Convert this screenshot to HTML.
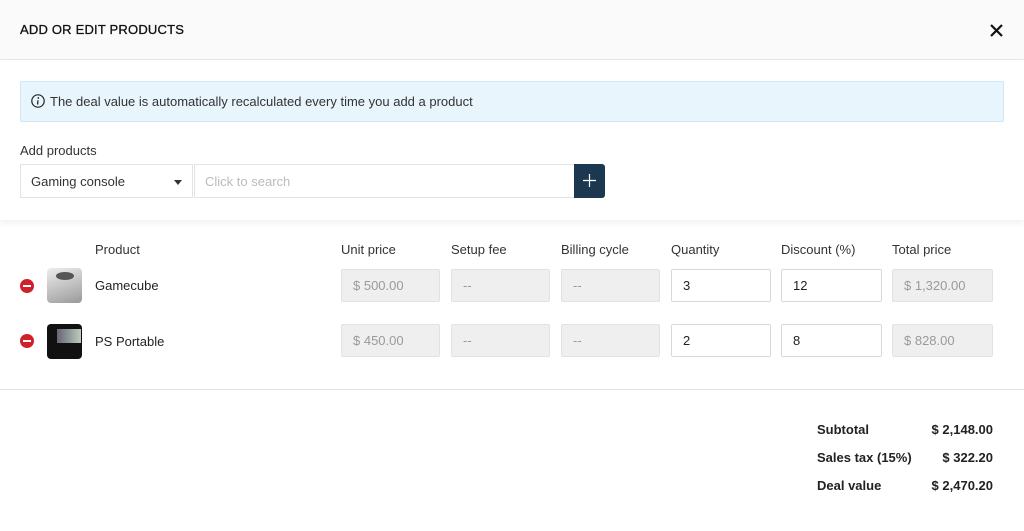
<!DOCTYPE html><html><head><style>
body{margin:0;width:1024px;height:531px;background:#fff;font-family:"Liberation Sans",sans-serif;color:#222;position:relative;overflow:hidden;font-size:13px}
.a{position:absolute}
.hdr{left:0;top:0;width:1024px;height:59px;background:#fafafa;border-bottom:1px solid #e6e6e6}
.top{left:0;top:60px;width:1024px;height:160px;background:#fff;box-shadow:0 3px 6px rgba(0,0,0,.06)}
.inp{position:absolute;height:33px;width:99px;border:1px solid #d9d9d9;box-sizing:border-box;padding-left:11px;line-height:32px;font-size:13px;border-radius:2px}
.dis{background:#efefef;color:#9a9a9a;border-color:#e2e2e2}
.th{position:absolute;top:242px;font-size:13px;color:#333}
.min{position:absolute;width:14px;height:14px;border-radius:50%;background:#d0202a;left:20px}
.min:after{content:"";position:absolute;left:3px;top:6px;width:8px;height:2px;background:#fff}
</style></head><body>
<div class="a hdr"></div>
<div class="a" style="left:20px;top:22px;font-size:13px;letter-spacing:.2px;color:#111;-webkit-text-stroke:.3px #111">ADD OR EDIT PRODUCTS</div>
<svg class="a" style="left:990px;top:24px" width="13" height="13"><path d="M1 1L12 12M12 1L1 12" stroke="#111" stroke-width="2.2"/></svg>
<div class="a top"></div>
<div class="a" style="left:20px;top:81px;width:982px;height:39px;background:#e9f5fc;border:1px solid #cfe8f4;border-radius:2px"></div>
<svg class="a" style="left:31px;top:94px" width="14" height="14"><circle cx="7" cy="7" r="6.2" fill="none" stroke="#222" stroke-width="1.2"/><circle cx="7.3" cy="4" r=".9" fill="#222"/><path d="M7 6.3L6.5 10.5" stroke="#222" stroke-width="1.3"/></svg>
<div class="a" style="left:50px;top:94px;color:#333">The deal value is automatically recalculated every time you add a product</div>
<div class="a" style="left:20px;top:143px;color:#333">Add products</div>
<div class="a" style="left:20px;top:164px;width:173px;height:34px;border:1px solid #e3e3e3;box-sizing:border-box"></div>
<div class="a" style="left:31px;top:174px;color:#333">Gaming console</div>
<div class="a" style="left:174px;top:180px;width:0;height:0;border-left:4px solid transparent;border-right:4px solid transparent;border-top:5px solid #333"></div>
<div class="a" style="left:194px;top:164px;width:381px;height:34px;border:1px solid #e3e3e3;box-sizing:border-box"></div>
<div class="a" style="left:205px;top:174px;color:#bbb">Click to search</div>
<div class="a" style="left:574px;top:164px;width:31px;height:34px;background:#1c3850;border-radius:0 3px 3px 0"></div>
<svg class="a" style="left:582px;top:173px" width="15" height="15"><path d="M7.5 1V14M1 7.5H14" stroke="#fff" stroke-width="1.2"/></svg>
<div class="th" style="left:95px">Product</div><div class="th" style="left:341px">Unit price</div><div class="th" style="left:451px">Setup fee</div><div class="th" style="left:561px">Billing cycle</div><div class="th" style="left:671px">Quantity</div><div class="th" style="left:781px">Discount (%)</div><div class="th" style="left:892px">Total price</div>
<div class="min" style="top:279px"></div><div class="min" style="top:334px"></div>
<div class="a" style="left:47px;top:268px;width:35px;height:35px;border-radius:4px;background:linear-gradient(160deg,#eee,#bbb 60%,#999)"></div>
<div class="a" style="left:56px;top:272px;width:18px;height:8px;border-radius:50%;background:#555"></div>
<div class="a" style="left:47px;top:324px;width:35px;height:35px;border-radius:4px;background:#111"></div>
<div class="a" style="left:57px;top:329px;width:24px;height:14px;background:linear-gradient(90deg,#667,#bcb)"></div>
<div class="a" style="left:95px;top:278px">Gamecube</div>
<div class="a" style="left:95px;top:334px">PS Portable</div>
<div class="inp dis" style="left:341px;top:269px">$ 500.00</div><div class="inp dis" style="left:451px;top:269px">--</div><div class="inp dis" style="left:561px;top:269px">--</div><div class="inp" style="left:671px;top:269px;width:100px">3</div><div class="inp" style="left:781px;top:269px;width:101px">12</div><div class="inp dis" style="left:892px;top:269px;width:101px">$ 1,320.00</div>
<div class="inp dis" style="left:341px;top:324px">$ 450.00</div><div class="inp dis" style="left:451px;top:324px">--</div><div class="inp dis" style="left:561px;top:324px">--</div><div class="inp" style="left:671px;top:324px;width:100px">2</div><div class="inp" style="left:781px;top:324px;width:101px">8</div><div class="inp dis" style="left:892px;top:324px;width:101px">$ 828.00</div>
<div class="a" style="left:0;top:389px;width:1024px;height:1px;background:#e3e3e3"></div>
<div class="a" style="left:817px;top:416px;line-height:28px;font-weight:bold;color:#222">Subtotal<br>Sales tax (15%)<br>Deal value</div>
<div class="a" style="right:31px;top:416px;line-height:28px;font-weight:bold;text-align:right;color:#222">$ 2,148.00<br>$ 322.20<br>$ 2,470.20</div>
</body></html>
